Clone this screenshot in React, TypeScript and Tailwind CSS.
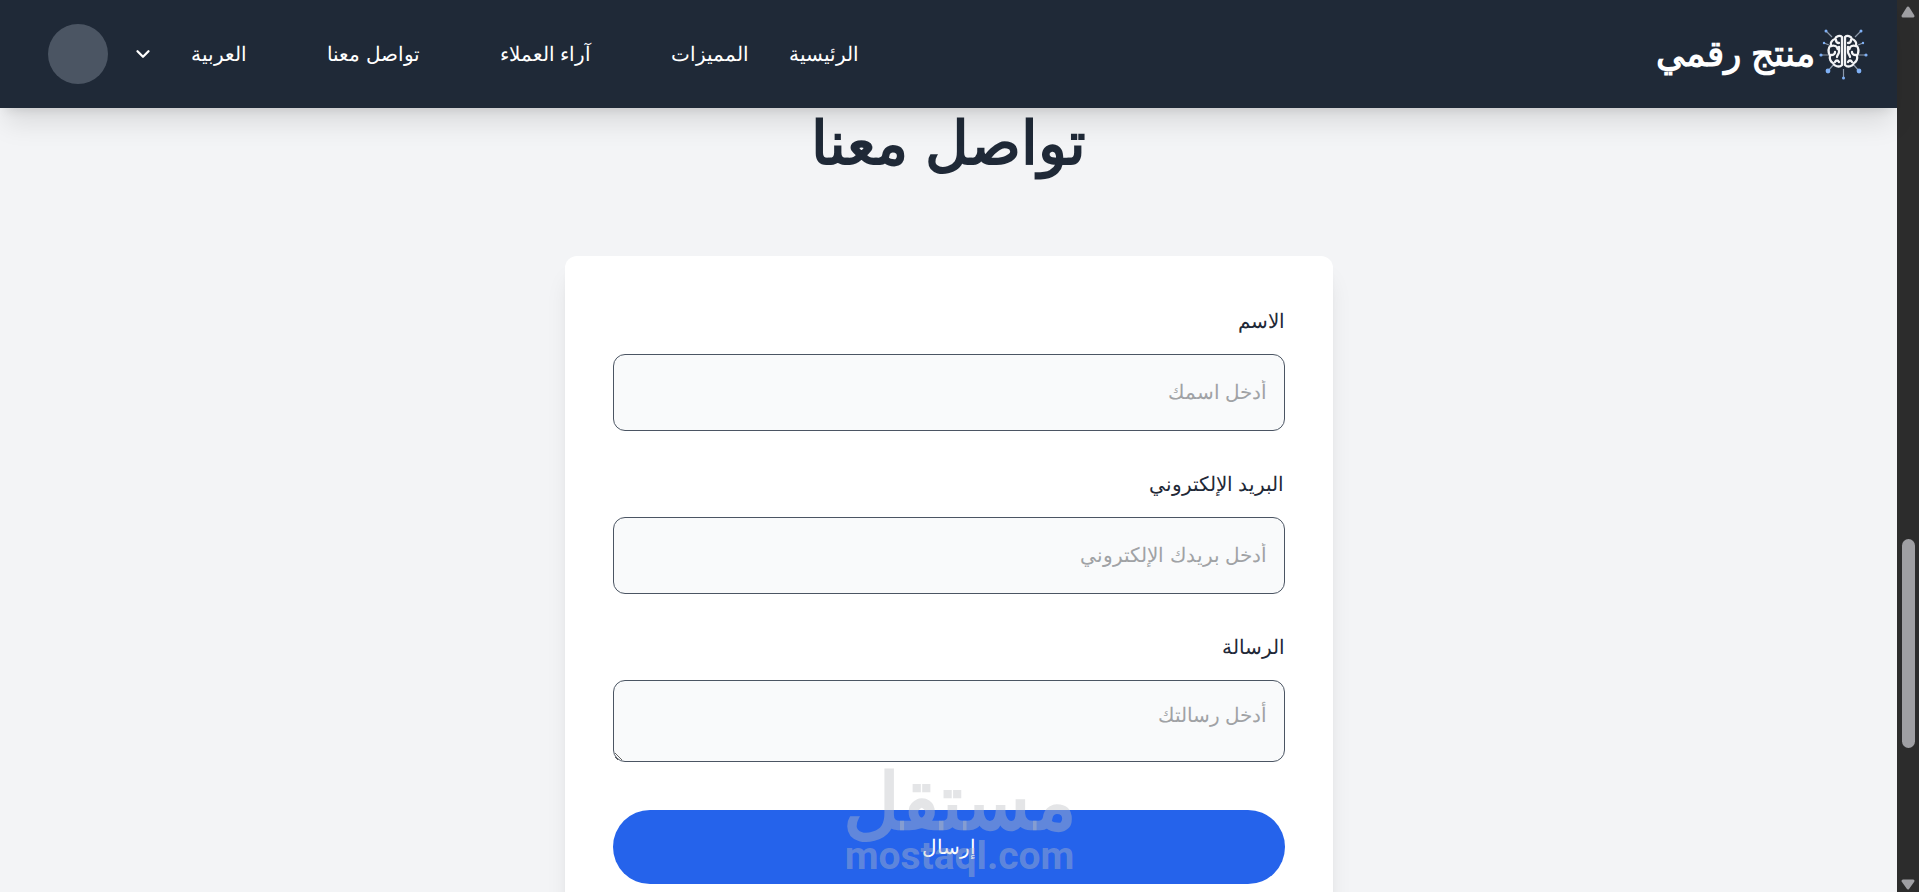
import { ChevronDown } from "lucide-react";

const links = [
  { label: "الرئيسية", href: "#home", gap: "me-10" },
  { label: "المميزات", href: "#features", gap: "me-20" },
  { label: "آراء العملاء", href: "#reviews", gap: "me-20" },
  { label: "تواصل معنا", href: "#contact", gap: "me-20" },
];

const fieldLabel = "mb-4 block leading-[34px]";
const field =
  "block w-full rounded-xl border border-[#4b5563] bg-[#f9fafb] px-4 text-[20px] leading-7 placeholder:text-[#a0a2a5]";

function BrainLogo() {
  return (
    <svg className="h-[52px] w-[50px]" viewBox="0 0 50 52" fill="none">
      <g stroke="#8b97a8" strokeWidth="1.2">
        <path d="M7 3l6 6M42 3l-6 6M5 15l5 2M44 15l-5 2M2 27h7M47 27h-7M9 43l6-7M40 43l-6-7M24.500 41v10" />
      </g>
      <g fill="#7fb0f5">
        <circle cx="7" cy="3" r="1.5" />
        <circle cx="42" cy="3" r="1.5" />
        <circle cx="5" cy="15" r="1.2" />
        <circle cx="44" cy="15" r="1.2" />
        <circle cx="2" cy="27" r="1.6" />
        <circle cx="47" cy="27" r="1.6" />
        <circle cx="9" cy="43" r="2.4" />
        <circle cx="40" cy="43" r="2.4" />
        <circle cx="24.500" cy="50" r="1.5" />
      </g>
      <g stroke="#f3f4f6" strokeWidth="2.3" strokeLinecap="round" strokeLinejoin="round">
        <path d="M23 9c-2-2-6-1-7 2-3 1-5 4-4 6-3 3-3 7-1 11-1 3 1 6 3 7 1 3 6 5 9 2z" />
        <path d="M26 9c2-2 6-1 7 2 3 1 5 4 4 6 3 3 3 7 1 11 1 3-1 6-3 7-1 3-6 5-9 2z" />
        <path d="M17 12c0 2 1 3 3 3M12.500 18c2-1 6 0 6 3M12 27c2 0 4-1 4-3M20 19v5c0 2-2 3-2 5M16 34c1-2 3-2 4 0" />
        <path d="M32 12c0 2-1 3-3 3M36.500 18c-2-1-6 0-6 3M37 27c-2 0-4-1-4-3M29 19v5c0 2 2 3 2 5M33 34c-1-2-3-2-4 0" />
      </g>
    </svg>
  );
}

function Navbar() {
  return (
    <nav className="relative z-10 flex h-[108px] shrink-0 items-center justify-between bg-[#1f2937] pe-12 ps-7 text-white shadow-xl">
      <a href="#home" className="flex items-center gap-1 text-[36px] font-bold leading-none">
        <BrainLogo />
        منتج رقمي
      </a>
      <div className="flex items-center text-[20px] leading-7">
        {links.map((link) => (
          <a key={link.href} href={link.href} className={link.gap}>
            {link.label}
          </a>
        ))}
        <div className="relative me-6 flex w-[115px] items-center">
          <select aria-label="اللغة" className="w-full appearance-none bg-transparent">
            <option>العربية</option>
          </select>
          <ChevronDown size={22} strokeWidth={2.5} className="pointer-events-none absolute left-0" />
        </div>
        <button aria-label="الحساب" className="size-[60px] rounded-full bg-[#4b5563]" />
      </div>
    </nav>
  );
}

function Watermark() {
  return (
    <div
      dir="ltr"
      className="pointer-events-none absolute bottom-4 left-1/2 z-20 flex -translate-x-1/2 flex-col items-center font-bold text-[#bbbec3]/40"
    >
      <span className="text-[78px] leading-[68px]">مستقل</span>
      <span className="font-[Roboto] text-[39px] leading-10">mostaql.com</span>
    </div>
  );
}

function ContactForm() {
  return (
    <form className="mx-auto flex w-full max-w-3xl flex-col gap-9 rounded-xl bg-white p-12 shadow-xl">
      <div>
        <label htmlFor="name" className={fieldLabel}>
          الاسم
        </label>
        <input id="name" type="text" placeholder="أدخل اسمك" className={field + " h-[77px]"} />
      </div>
      <div>
        <label htmlFor="email" className={fieldLabel}>
          البريد الإلكتروني
        </label>
        <input id="email" type="email" placeholder="أدخل بريدك الإلكتروني" className={field + " h-[77px]"} />
      </div>
      <div>
        <label htmlFor="message" className={fieldLabel}>
          الرسالة
        </label>
        <textarea
          id="message"
          placeholder="أدخل رسالتك"
          className={field + " mb-3 h-[82px] resize-y py-5"}
        />
      </div>
      <button type="submit" className="h-[74px] rounded-full bg-[#2563eb] text-white">
        إرسال
      </button>
    </form>
  );
}

function ScrollBar() {
  return (
    <div className="flex w-[22px] shrink-0 flex-col items-center bg-[#2c2c2c] pb-px pt-1">
      <svg className="h-4 w-4" viewBox="0 0 16 16">
        <path d="M8 4l5 8H3z" fill="#9f9fa3" stroke="#9f9fa3" strokeWidth="3" strokeLinejoin="round" />
      </svg>
      <div className="grow-[519]" />
      <div className="w-[13px] grow-[209] rounded-full bg-[#9f9fa3]" />
      <div className="grow-[131]" />
      <svg className="h-3 w-4" viewBox="0 0 16 12">
        <path d="M8 9l5-7H3z" fill="#9f9fa3" stroke="#9f9fa3" strokeWidth="3" strokeLinejoin="round" />
      </svg>
    </div>
  );
}

export default function App() {
  return (
    <div className="relative flex h-screen overflow-hidden font-['Liberation_Sans',sans-serif]">
      <div dir="rtl" className="flex min-w-0 flex-1 flex-col bg-[#f3f4f6] text-[20px] text-[#1f2937]">
        <Navbar />
        <main id="contact" className="min-h-0 flex-1 overflow-hidden">
          <h1 className="mb-[76px] text-center text-[60px] font-bold leading-[72px]">تواصل معنا</h1>
          <ContactForm />
        </main>
      </div>
      <ScrollBar />
      <Watermark />
    </div>
  );
}
